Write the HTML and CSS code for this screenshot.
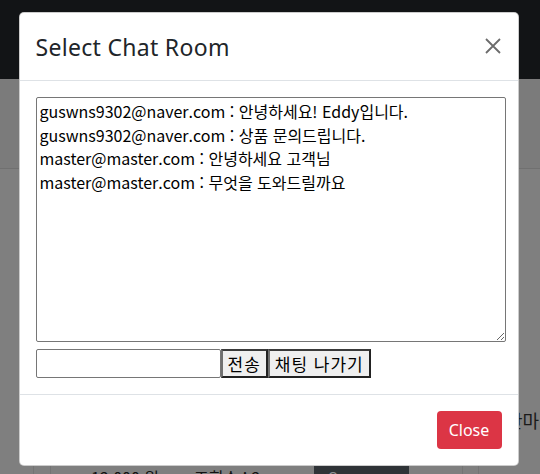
FILE: index.html
```html
<!DOCTYPE html>
<html lang="ko">
<head>
<meta charset="utf-8">
<title>Select Chat Room</title>
<link rel="stylesheet" href="styles.css">
</head>
<body>
<div class="page">
  <header class="navbar"></header>
  <section class="hero"></section>
  <main class="cards">
    <div class="card card-main">
      <div class="card-inner">
        <div class="card-meta">
          <span class="price">12,000 원</span>
          <span class="views">조회수 : 2</span>
          <span class="detail-btn">See Detail</span>
        </div>
      </div>
    </div>
    <div class="card card-side">
      <div class="card-inner side-inner">
        <span class="side-title">한마</span>
      </div>
    </div>
  </main>
</div>

<div class="overlay">
  <div class="modal">
    <div class="modal-header">
      <h5 class="modal-title">Select Chat Room</h5>
      <button class="btn-x" aria-label="Close">
        <svg width="16" height="16" viewBox="0 0 16 16"><path d="M1 1 L15 15 M15 1 L1 15" stroke="#6c6c6c" stroke-width="1.8" fill="none"/></svg>
      </button>
    </div>
    <div class="modal-body">
      <textarea class="chat-log" readonly>guswns9302@naver.com : 안녕하세요! Eddy입니다.
guswns9302@naver.com : 상품 문의드립니다.
master@master.com : 안녕하세요 고객님
master@master.com : 무엇을 도와드릴까요</textarea>
      <div class="send-row">
        <input class="msg-input" type="text">
        <button class="plain-btn">전송</button>
        <button class="plain-btn">채팅 나가기</button>
      </div>
    </div>
    <div class="modal-footer">
      <button class="btn-close">Close</button>
    </div>
  </div>
</div>
</body>
</html>
```

FILE: styles.css
```css
* { box-sizing: border-box; }
html, body { margin: 0; padding: 0; }
body {
  width: 540px;
  height: 474px;
  overflow: hidden;
  background: #7f7f7f;
  font-family: "Noto Sans", "Noto Sans CJK KR", sans-serif;
  position: relative;
}
.page { display: flex; flex-direction: column; height: 474px; overflow: hidden; }
.navbar { height: 79px; flex: none; background: #121416; }
.hero { height: 90px; flex: none; background: #7b7b7b; border-bottom: 1px solid #707070; }
.cards {
  display: flex;
  gap: 16px;
  padding: 0 0 0 33px;
  flex: 1;
}
.card { border-left: 1px solid #747474; }
.card-main { width: 423px; display: flex; }
.card-inner {
  flex: 1;
  margin-left: 16px;
  border-left: 1px solid #747474;
  display: flex;
  flex-direction: column;
  justify-content: flex-end;
}
.card-meta {
  display: flex;
  align-items: flex-start;
  height: 20px;
  margin-bottom: -12px;
  font-family: "Noto Sans CJK KR", sans-serif;
  font-size: 16px;
  color: #111;
}
.price { margin-left: 40px; width: 103px; line-height: 22px; }
.views { width: 120px; line-height: 22px; }
.detail-btn {
  background: #2f3337;
  color: #8c8f92;
  padding: 0 14px;
  line-height: 22px;
  width: 95px;
  height: 30px;
  margin-top: -5px;
  padding-top: 5px;
}
.card-side { width: 80px; display: flex; }
.side-inner { justify-content: flex-start; border-left: 1px solid #747474; margin-left: 15px; }
.side-title {
  margin-top: 240px;
  padding-left: 27px;
  font-family: "Noto Sans CJK KR", sans-serif;
  font-size: 18px;
  line-height: 22px;
  color: #1a1a1a;
  white-space: nowrap;
}

.overlay {
  position: absolute;
  inset: 0;
  display: flex;
  justify-content: center;
  align-items: flex-start;
}
.modal {
  margin-top: 12px;
  margin-left: -3px;
  width: 500px;
  background: #fff;
  border: 1px solid rgba(0,0,0,.2);
  border-radius: 5px;
  display: flex;
  flex-direction: column;
}
.modal-header {
  display: flex;
  justify-content: space-between;
  align-items: center;
  padding: 16px;
  border-bottom: 1px solid #dee2e6;
  height: 68px;
}
.modal-title {
  margin: 0;
  font-family: "Noto Sans", sans-serif;
  font-weight: 400;
  font-size: 23px;
  color: #212529;
  line-height: 36px;
  letter-spacing: 0.3px;
}
.btn-x {
  border: 0;
  background: none;
  padding: 0;
  margin-right: 1px;
  margin-top: -2px;
  display: flex;
}
.modal-body {
  padding: 16px;
  display: flex;
  flex-direction: column;
  gap: 7px;
}
.chat-log {
  width: 470px;
  height: 245px;
  margin: 0;
  padding: 2px 3px;
  border: 1px solid #767676;
  border-radius: 2px;
  font-family: "Noto Sans CJK KR", sans-serif;
  font-size: 16px;
  letter-spacing: 0;
  line-height: 23.6px;
  color: #000;
  resize: both;
  outline: none;
}
.send-row { display: flex; height: 29px; }
.msg-input {
  width: 185px;
  height: 29px;
  margin: 0;
  border: 1px solid #767676;
  border-radius: 2px;
  padding: 1px 2px;
}
.plain-btn {
  height: 29px;
  margin: 0;
  padding: 0 5px;
  background: #efefef;
  border-width: 2px;
  border-style: solid;
  border-color: #3a3a3a #222 #222 #707070;
  font-family: "Noto Sans CJK KR", sans-serif;
  font-size: 17px;
  letter-spacing: 1px;
  color: #000;
  line-height: 23px;
}
.modal-footer {
  border-top: 1px solid #dee2e6;
  padding: 16px;
  display: flex;
  justify-content: flex-end;
}
.btn-close {
  width: 65px;
  height: 38px;
  border: 0;
  border-radius: 4px;
  background: #dc3545;
  color: #fff;
  font-family: "Noto Sans", sans-serif;
  font-size: 16px;
  padding: 0;
}
```
